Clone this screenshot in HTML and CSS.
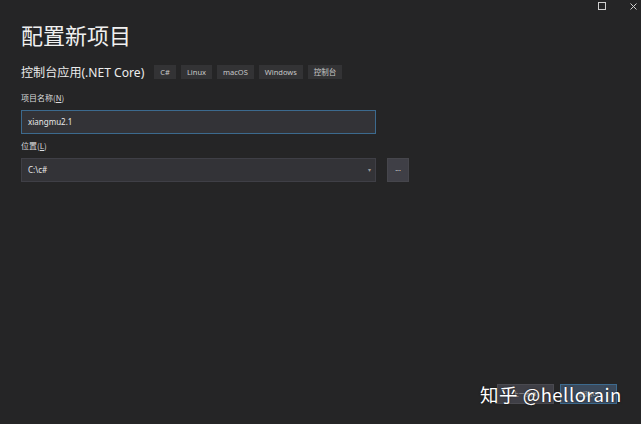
FILE: index.html
```html
<!DOCTYPE html>
<html lang="zh">
<head>
<meta charset="utf-8">
<link rel="stylesheet" href="styles.css">
</head>
<body>
<div class="win">
  <div class="controls">
    <svg class="max" width="8" height="8" viewBox="0 0 8 8"><rect x="0.5" y="0.5" width="7" height="7" fill="none" stroke="#cfcfcf" stroke-width="1"/></svg>
    <svg class="close" width="7" height="7" viewBox="0 0 7 7"><path d="M0.5 0.5L6.5 6.5M6.5 0.5L0.5 6.5" stroke="#cfcfcf" stroke-width="1"/></svg>
  </div>
  <div class="content">
    <h1 class="title">配置新项目</h1>
    <div class="sub">
      <span class="subname">控制台应用(.NET Core)</span>
      <span class="tag">C#</span>
      <span class="tag">Linux</span>
      <span class="tag">macOS</span>
      <span class="tag">Windows</span>
      <span class="tag">控制台</span>
    </div>
    <div class="label first">项目名称(<u>N</u>)</div>
    <div class="input focus">xiangmu2.1</div>
    <div class="label">位置(<u>L</u>)</div>
    <div class="row">
      <div class="input select">C:\c#<span class="caret">▾</span></div>
      <div class="browse">...</div>
    </div>
  </div>
  <div class="footer">
    <span class="btn">上一步(B)</span>
    <span class="btn primary">创建(C)</span>
    <span class="wm">知乎 @hellorain</span>
  </div>
</div>
</body>
</html>
```
FILE: styles.css
```css
html, body { margin: 0; padding: 0; }
body {
  width: 641px; height: 424px; overflow: hidden;
  background: #252526;
  font-family: "Noto Sans", "Noto Sans CJK SC", sans-serif;
  color: #e6e6e6;
}
.win { position: relative; width: 641px; height: 424px; }
.controls { position: absolute; top: 2px; right: 4px; display: flex; align-items: center; gap: 24px; }
.max { display: block; }
.close { display: block; }
.content { padding: 19px 0 0 21px; }
.title {
  margin: 0; font-weight: 400; font-size: 22px; line-height: 30px;
  font-family: "Noto Sans CJK SC", sans-serif; color: #f0f0f0;
}
.sub { display: flex; align-items: center; margin-top: 15px; height: 16px; }
.subname { font-size: 12.1px; color: #ececec; margin-right: 10px; font-family: "Noto Sans", "Noto Sans CJK SC", sans-serif; }
.tag {
  font-size: 7.5px; background: #333335; color: #c8c8c8;
  padding: 0 6px; height: 14px; line-height: 14px; margin-right: 5px;
}
.label { font-size: 8px; color: #dcdcdc; margin-top: 7px; line-height: 10px; font-family: "Noto Sans CJK SC", sans-serif; }
.label.first { margin-top: 13px; }
.input {
  box-sizing: border-box; width: 355px; height: 24px;
  background: #333337; border: 1px solid #3f3f46;
  font-size: 8px; color: #e8e8e8; padding-left: 6px; line-height: 22px;
  margin-top: 7px;
}
.input.focus { border-color: #3c6a8e; }
.row { display: flex; gap: 11px; margin-top: 7px; }
.row .input { margin-top: 0; position: relative; }
.caret { position: absolute; right: 4px; top: 0; font-size: 6px; color: #999; }
.browse {
  box-sizing: border-box; width: 22px; height: 24px; background: #3f3f46;
  border: 1px solid #46464c; font-size: 7px; color: #ddd; text-align: center; line-height: 20px;
}
.footer { position: absolute; left: 497px; top: 384px; display: flex; gap: 6px; }
.btn {
  box-sizing: border-box; width: 57px; height: 20px; background: #3f3f46;
  border: 1px solid #4a4a50; font-size: 6px; color: #aaa; text-align: center; line-height: 18px;
}
.btn.primary { background: #3b4a5c; border-color: #3c6a8e; }
.wm {
  position: absolute; left: -17px; top: -2px; font-size: 18.5px; color: #fff; letter-spacing: 0.5px;
  white-space: nowrap; font-family: "Noto Sans CJK SC", sans-serif; line-height: 24px;
  text-shadow: 0 0 2px rgba(0,0,0,0.6);
}
```
